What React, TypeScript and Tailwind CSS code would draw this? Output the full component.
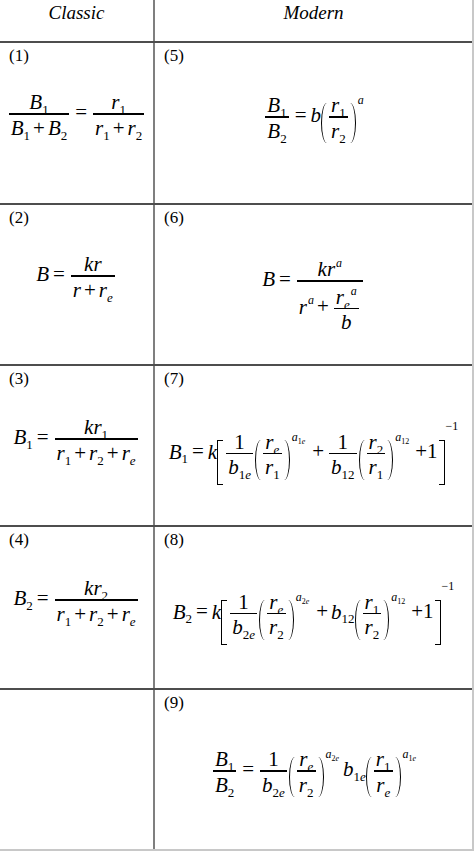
import React from "react";

type P = { children?: React.ReactNode };

const serif = "[font-family:'Liberation_Serif','Times_New_Roman',serif]";

const V = ({ children }: P) => <span className="italic">{children}</span>;

const Sub = ({ children }: P) => (
  <span className="relative top-[5px] text-[13px]">{children}</span>
);

const Sup = ({ children }: P) => (
  <span className="relative -top-[9px] ml-[1px] text-[12px]">{children}</span>
);

const Op = ({ children }: P) => <span className="mx-[3px]">{children}</span>;
const Eq = () => <span className="mx-[4px]">=</span>;

// exponent like a_{1e}
const A = ({ s }: { s: React.ReactNode }) => (
  <span className="text-[12px] italic">
    a<span className="relative top-[3px] text-[8px] not-italic">{s}</span>
  </span>
);

function Frac({
  num,
  den,
  h = "h-[23px]",
  pt = "pt-[3px]",
}: {
  num: React.ReactNode;
  den: React.ReactNode;
  h?: string;
  pt?: string;
}) {
  return (
    <span className="mx-[2px] inline-flex flex-col align-middle">
      <span className={`flex items-end justify-center px-[2px] ${h}`}>
        <span>{num}</span>
      </span>
      <span className="h-[1.5px] bg-black" />
      <span className={`flex items-start justify-center px-[2px] ${pt} ${h}`}>
        <span>{den}</span>
      </span>
    </span>
  );
}

const LP = () => (
  <span className="relative top-[6px] inline-block h-[40px] w-[6px] rounded-l-[100%_50%] border-l-[1.5px] border-black" />
);
const RP = () => (
  <span className="relative top-[6px] inline-block h-[40px] w-[6px] rounded-r-[100%_50%] border-r-[1.5px] border-black" />
);

function Pg({ children, exp }: P & { exp?: React.ReactNode }) {
  return (
    <span className="inline-flex items-center align-middle">
      <LP />
      {children}
      <RP />
      {exp && <span className="-mt-[6px] ml-[2px] self-start">{exp}</span>}
    </span>
  );
}

function Bracket({ children }: P) {
  return (
    <span className="inline-flex items-center align-middle">
      <span className="relative top-[9px] inline-block h-[45px] w-[6px] border-y-[1.5px] border-l-[1.5px] border-black" />
      <span className="px-[1px]">{children}</span>
      <span className="relative top-[9px] inline-block h-[45px] w-[6px] border-y-[1.5px] border-r-[1.5px] border-black" />
      <span className="-mt-[10px] ml-[1px] self-start text-[12px]">−1</span>
    </span>
  );
}

const r = (s: React.ReactNode) => (
  <>
    <V>r</V>
    <Sub>{s}</Sub>
  </>
);
const B = (s: React.ReactNode) => (
  <>
    <V>B</V>
    <Sub>{s}</Sub>
  </>
);
const e = <V>e</V>;

function Cell({
  label,
  children,
  pb,
  className = "",
}: P & { label?: string; pb: string; className?: string }) {
  return (
    <div className={`flex flex-col ${className}`}>
      <div className="h-[22px] pl-[9px] pt-[4px] text-[17px] leading-none">{label}</div>
      <div className={`flex flex-1 items-center justify-center text-[21px] leading-none ${pb}`}>
        <div className="whitespace-nowrap">{children}</div>
      </div>
    </div>
  );
}

function Row({
  h,
  last,
  left,
  right,
}: {
  h: string;
  last?: boolean;
  left: React.ReactNode;
  right: React.ReactNode;
}) {
  return (
    <div className={`flex ${h} ${last ? "" : "border-b-2 border-[#4d4d4d]"}`}>
      <div className="w-[155px] border-r-2 border-[#7f7f7f]">{left}</div>
      <div className="flex-1">{right}</div>
    </div>
  );
}

export default function App() {
  return (
    <div
      className={`flex h-[851px] w-[474px] flex-col border-b-2 border-r-2 border-[#c8c8c8] bg-white text-black ${serif}`}
    >
      <div className="flex h-[43px] border-b-2 border-[#4d4d4d]">
        <div className="w-[155px] border-r-2 border-[#7f7f7f] pt-[3px] text-center text-[19px] italic leading-none">
          Classic
        </div>
        <div className="flex-1 pt-[3px] text-center text-[19px] italic leading-none">Modern</div>
      </div>

      <Row
        h="h-[162px]"
        left={
          <Cell label="(1)" pb="pb-[40px]" className="h-full">
            <Frac
              num={B("1")}
              den={
                <>
                  {B("1")}
                  <Op>+</Op>
                  {B("2")}
                </>
              }
            />
            <Eq />
            <Frac
              num={r("1")}
              den={
                <>
                  {r("1")}
                  <Op>+</Op>
                  {r("2")}
                </>
              }
            />
          </Cell>
        }
        right={
          <Cell label="(5)" pb="pb-[34px]" className="h-full">
            <Frac num={B("1")} den={B("2")} />
            <Eq />
            <V>b</V>
            <Pg exp={<span className="text-[12px] italic">a</span>}>
              <Frac num={r("1")} den={r("2")} />
            </Pg>
          </Cell>
        }
      />

      <Row
        h="h-[161px]"
        left={
          <Cell label="(2)" pb="pb-[39px]" className="h-full">
            <V>B</V>
            <Eq />
            <Frac
              num={<V>kr</V>}
              den={
                <>
                  <V>r</V>
                  <Op>+</Op>
                  {r(e)}
                </>
              }
            />
          </Cell>
        }
        right={
          <Cell label="(6)" pb="pb-[43px]" className="h-full">
            <V>B</V>
            <Eq />
            <Frac
              h="h-[54px]"
              num={
                <>
                  <V>kr</V>
                  <Sup>
                    <V>a</V>
                  </Sup>
                </>
              }
              den={
                <>
                  <V>r</V>
                  <Sup>
                    <V>a</V>
                  </Sup>
                  <Op>+</Op>
                  <Frac
                    num={
                      <>
                        {r(e)}
                        <Sup>
                          <V>a</V>
                        </Sup>
                      </>
                    }
                    den={<V>b</V>}
                  />
                </>
              }
            />
          </Cell>
        }
      />

      <Row
        h="h-[161px]"
        left={
          <Cell label="(3)" pb="pb-[35px]" className="h-full">
            {B("1")}
            <Eq />
            <Frac
              num={
                <>
                  <V>k</V>
                  {r("1")}
                </>
              }
              den={
                <>
                  {r("1")}
                  <Op>+</Op>
                  {r("2")}
                  <Op>+</Op>
                  {r(e)}
                </>
              }
            />
          </Cell>
        }
        right={
          <Cell label="(7)" pb="pb-[6px]" className="h-full">
            {B("1")}
            <Eq />
            <V>k</V>
            <Bracket>
              <Frac num="1" den={<><V>b</V><Sub>1<V>e</V></Sub></>} />
              <Pg exp={<A s={<>1<V>e</V></>} />}>
                <Frac num={r(e)} den={r("1")} />
              </Pg>
              <span className="ml-[4px]">
                <Op>+</Op>
              </span>
              <Frac num="1" den={<><V>b</V><Sub>12</Sub></>} />
              <Pg exp={<A s="12" />}>
                <Frac num={r("2")} den={r("1")} />
              </Pg>
              <span className="ml-[6px]">+1</span>
            </Bracket>
          </Cell>
        }
      />

      <Row
        h="h-[163px]"
        left={
          <Cell label="(4)" pb="pb-[37px]" className="h-full">
            {B("2")}
            <Eq />
            <Frac
              num={
                <>
                  <V>k</V>
                  {r("2")}
                </>
              }
              den={
                <>
                  {r("1")}
                  <Op>+</Op>
                  {r("2")}
                  <Op>+</Op>
                  {r(e)}
                </>
              }
            />
          </Cell>
        }
        right={
          <Cell label="(8)" pb="pb-[10px]" className="h-full">
            {B("2")}
            <Eq />
            <V>k</V>
            <Bracket>
              <Frac num="1" den={<><V>b</V><Sub>2<V>e</V></Sub></>} />
              <Pg exp={<A s={<>2<V>e</V></>} />}>
                <Frac num={r(e)} den={r("2")} />
              </Pg>
              <span className="ml-[4px]">
                <Op>+</Op>
              </span>
              <V>b</V>
              <Sub>12</Sub>
              <Pg exp={<A s="12" />}>
                <Frac num={r("1")} den={r("2")} />
              </Pg>
              <span className="ml-[6px]">+1</span>
            </Bracket>
          </Cell>
        }
      />

      <Row
        h="flex-1"
        last
        left={<div />}
        right={
          <Cell label="(9)" pb="pb-[19px]" className="h-full">
            <Frac num={B("1")} den={B("2")} />
            <Eq />
            <Frac num="1" den={<><V>b</V><Sub>2<V>e</V></Sub></>} />
            <Pg exp={<A s={<>2<V>e</V></>} />}>
              <Frac num={r(e)} den={r("2")} />
            </Pg>
            <span className="ml-[4px]">
              <V>b</V>
              <Sub>1<V>e</V></Sub>
            </span>
            <Pg exp={<A s={<>1<V>e</V></>} />}>
              <Frac num={r("1")} den={r(e)} />
            </Pg>
          </Cell>
        }
      />
    </div>
  );
}
